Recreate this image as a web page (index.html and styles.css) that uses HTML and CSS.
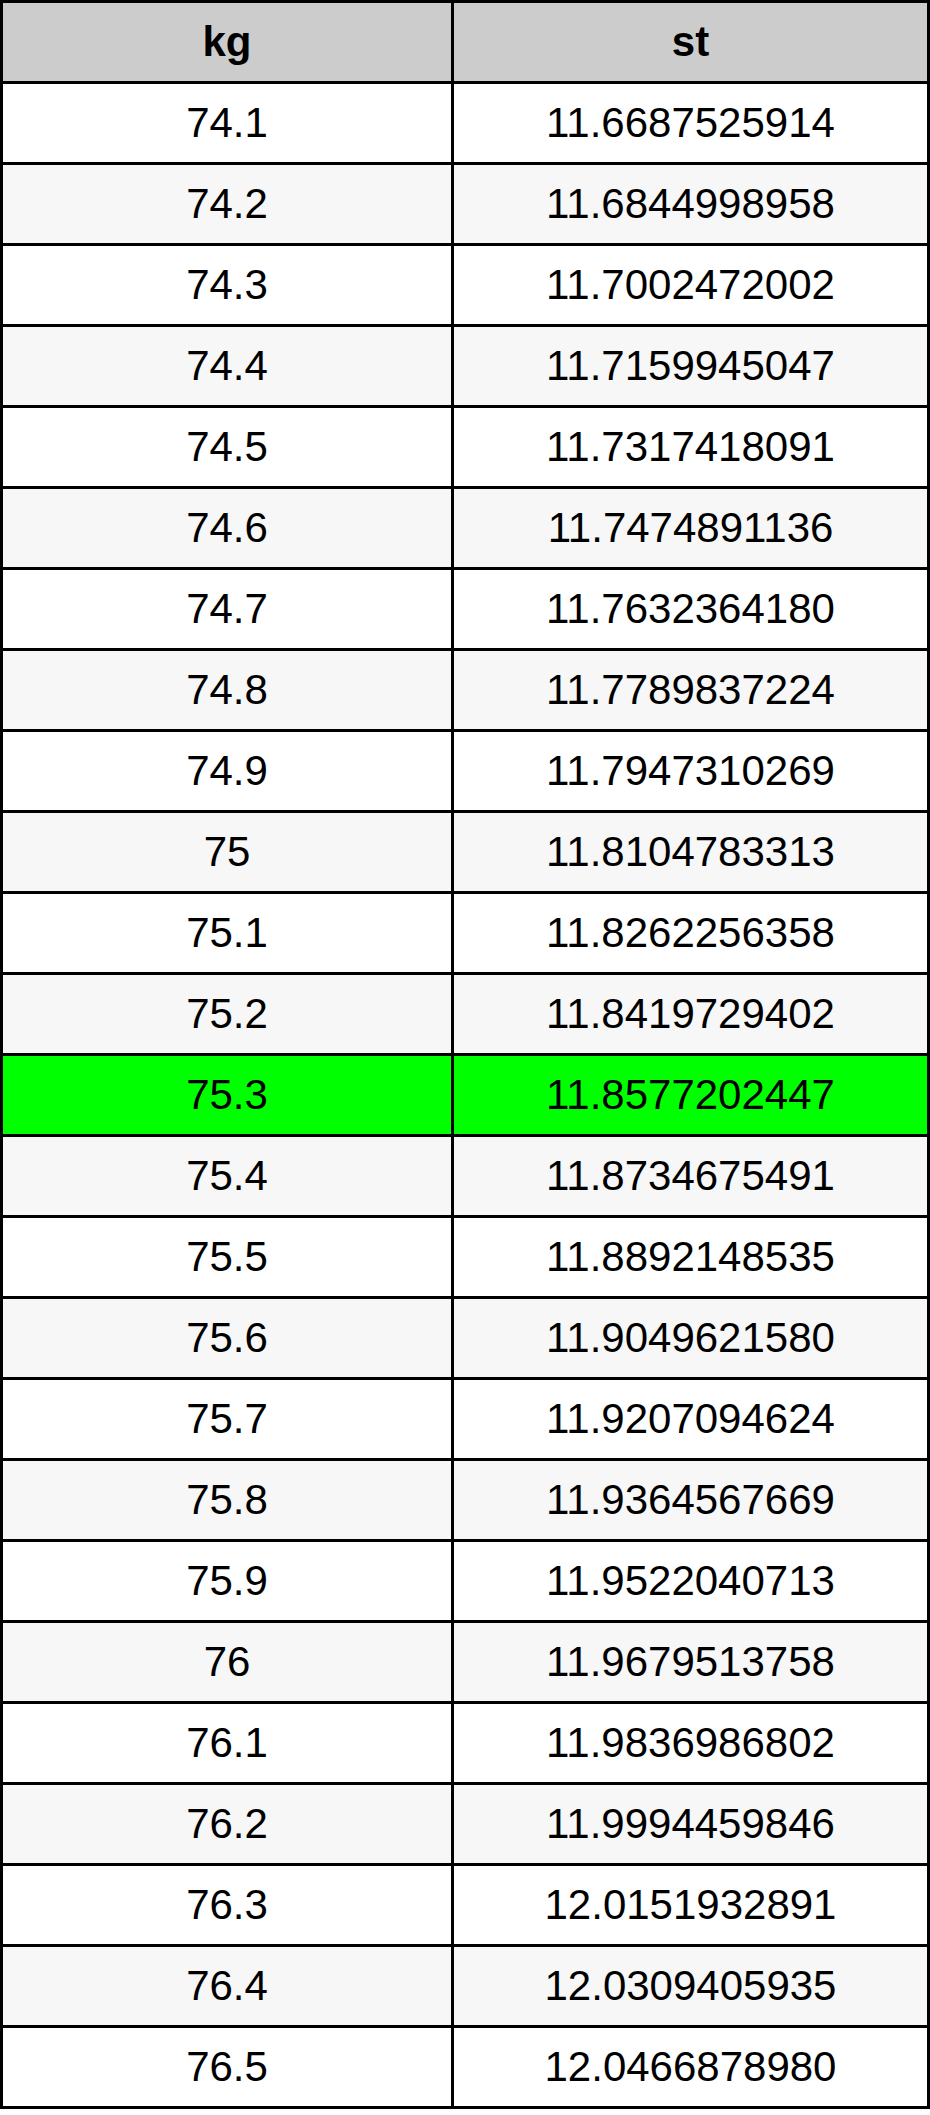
FILE: index.html
```html
<!DOCTYPE html>
<html>
<head>
<meta charset="utf-8">
<title>kg to st</title>
<link rel="stylesheet" href="styles.css">
</head>
<body>
<table class="conv">
<colgroup><col class="c1"><col class="c2"></colgroup>
<thead>
<tr><th>kg</th><th>st</th></tr>
</thead>
<tbody>
<tr><td>74.1</td><td>11.6687525914</td></tr>
<tr class="alt"><td>74.2</td><td>11.6844998958</td></tr>
<tr><td>74.3</td><td>11.7002472002</td></tr>
<tr class="alt"><td>74.4</td><td>11.7159945047</td></tr>
<tr><td>74.5</td><td>11.7317418091</td></tr>
<tr class="alt"><td>74.6</td><td>11.7474891136</td></tr>
<tr><td>74.7</td><td>11.7632364180</td></tr>
<tr class="alt"><td>74.8</td><td>11.7789837224</td></tr>
<tr><td>74.9</td><td>11.7947310269</td></tr>
<tr class="alt"><td>75</td><td>11.8104783313</td></tr>
<tr><td>75.1</td><td>11.8262256358</td></tr>
<tr class="alt"><td>75.2</td><td>11.8419729402</td></tr>
<tr class="hl"><td>75.3</td><td>11.8577202447</td></tr>
<tr class="alt"><td>75.4</td><td>11.8734675491</td></tr>
<tr><td>75.5</td><td>11.8892148535</td></tr>
<tr class="alt"><td>75.6</td><td>11.9049621580</td></tr>
<tr><td>75.7</td><td>11.9207094624</td></tr>
<tr class="alt"><td>75.8</td><td>11.9364567669</td></tr>
<tr><td>75.9</td><td>11.9522040713</td></tr>
<tr class="alt"><td>76</td><td>11.9679513758</td></tr>
<tr><td>76.1</td><td>11.9836986802</td></tr>
<tr class="alt"><td>76.2</td><td>11.9994459846</td></tr>
<tr><td>76.3</td><td>12.0151932891</td></tr>
<tr class="alt"><td>76.4</td><td>12.0309405935</td></tr>
<tr><td>76.5</td><td>12.0466878980</td></tr>
</tbody>
</table>
</body>
</html>
```
FILE: styles.css
```css
html, body {
  margin: 0;
  padding: 0;
  background: #ffffff;
}

.conv {
  width: 930px;
  table-layout: fixed;
  border-collapse: separate;
  border-spacing: 0;
  border-top: 3px solid #000;
  border-left: 3px solid #000;
  font-family: "Liberation Sans", Arial, sans-serif;
  font-size: 42px;
  color: #000;
}

.c1 { width: 451px; }
.c2 { width: 476px; }

.conv th,
.conv td {
  padding: 0;
  height: 78px;
  line-height: 78px;
  text-align: center;
  border-right: 3px solid #000;
  border-bottom: 3px solid #000;
  background: #ffffff;
}

.conv th {
  font-weight: bold;
  background: #cccccc;
}

.conv tr.alt td {
  background: #f7f7f7;
}

.conv tr.hl td {
  background: #00ff00;
}
```
